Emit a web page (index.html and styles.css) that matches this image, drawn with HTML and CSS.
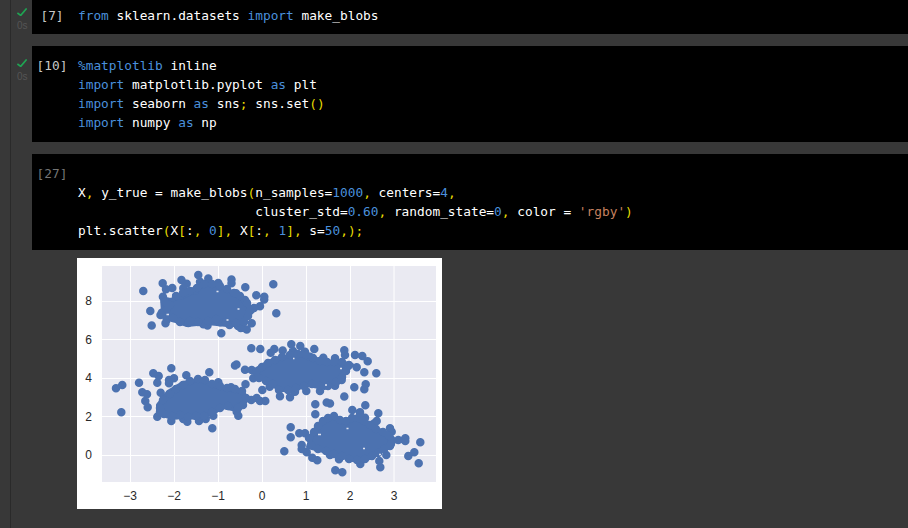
FILE: index.html
```html
<!DOCTYPE html>
<html lang="en">
<head>
    <meta charset="UTF-8">
    <meta name="viewport" content="width=device-width, initial-scale=1.0">
    <title>Notebook</title>
    <link rel="stylesheet" href="styles.css">
</head>
<body>
    <div class="page">
        <div class="rail"></div>
        <main class="notebook">
            <section class="cell cell-first">
                <div class="status">
                    <svg class="check" viewBox="0 0 10 8"><path d="M.4 5 3.7 7.4 9.7.4"/></svg>
                    <span class="time">0s</span>
                </div>
                <div class="code">
                    <span class="prompt">[7]</span>
<pre class="source"><span class="kw">from</span> sklearn.datasets <span class="kw">import</span> make_blobs</pre>
                </div>
            </section>

            <section class="cell">
                <div class="status">
                    <svg class="check" viewBox="0 0 10 8"><path d="M.4 5 3.7 7.4 9.7.4"/></svg>
                    <span class="time">0s</span>
                </div>
                <div class="code">
                    <span class="prompt">[10]</span>
<pre class="source"><span class="kw">%matplotlib</span> inline
<span class="kw">import</span> matplotlib.pyplot <span class="kw">as</span> plt
<span class="kw">import</span> seaborn <span class="kw">as</span> sns<span class="pn">;</span> sns.set<span class="pn">()</span>
<span class="kw">import</span> numpy <span class="kw">as</span> np</pre>
                </div>
            </section>

            <section class="cell">
                <div class="status"></div>
                <div class="code">
                    <span class="prompt prompt-idle">[27]</span>
<pre class="source">

X<span class="pn">,</span> y_true = make_blobs<span class="pn">(</span>n_samples=<span class="num">1000</span><span class="pn">,</span> centers=<span class="num">4</span><span class="pn">,</span>
                       cluster_std=<span class="num">0.60</span><span class="pn">,</span> random_state=<span class="num">0</span><span class="pn">,</span> color = <span class="str">'rgby'</span><span class="pn">)</span>
plt.scatter<span class="pn">(</span>X<span class="pn">[</span>:<span class="pn">,</span> <span class="num">0</span><span class="pn">],</span> X<span class="pn">[</span>:<span class="pn">,</span> <span class="num">1</span><span class="pn">],</span> s=<span class="num">50</span><span class="pn">,);</span></pre>
                </div>
            </section>

            <div class="output">
                <!-- viewBox uses page pixels so the points read straight off the screenshot -->
                <svg class="plot" viewBox="77 258 365 251">
                    <rect class="axes" x="102" y="266" width="334" height="216"/>
                    <path class="grid" d="M130.5 266V482M174.5 266V482M218.5 266V482M262.5 266V482M306.5 266V482M350.5 266V482M394 266V482M102 301.5H436M102 339.5H436M102 378.5H436M102 416.5H436M102 455.5H436"/>

                    <polygon class="blob" points="162,298 170,300 183,297 197,290 207,282 222,287 238,295 250,307 257,307 247,317 243,325 227,325 207,323 187,325 173,320 163,313"/>
                    <polygon class="blob" points="158,405 168,392 183,383 198,380 207,383 220,388 243,392 247,400 240,407 237,410 223,407 213,413 200,418 183,417 172,418 158,413"/>
                    <polygon class="blob" points="255,370 268,362 282,357 305,355 325,362 340,362 352,365 345,373 338,383 325,388 308,385 292,390 278,390 272,382 258,378"/>
                    <polygon class="blob" points="313,432 323,420 333,417 343,423 353,418 367,422 373,428 387,433 393,438 393,445 380,452 370,458 353,460 337,455 320,450 308,447"/>

                    <!-- top cluster -->
                    <path class="dots" d="M143.3 291h0M150.3 311h0M151.7 325.5h0M162.7 283.3h0M166 289.3h0M172.3 288h0M181.5 280h0M186.7 283.8h0M183.3 288.3h0M198.3 275h0M200 281.7h0M195 290.5h0M208.3 278.6h0M218.3 283h0M231.5 279.5h0M231.5 283.3h0M245.3 287.3h0M256.3 295.3h0M264.3 296.7h0M264.2 299.6h0M260 306.3h0M276.3 313.3h0M273.3 284.3h0M245 300h0M236 293.3h0M162.9 296.7h0M160.5 315h0M161.7 312.7h0M165.5 323.3h0M166.7 320h0M188.3 323h0M203.3 324.3h0M207.5 325.5h0M221.3 333.3h0M229.5 325h0M220 322.3h0M240.7 328h0M246.7 329.5h0M251.7 323.3h0M238 326h0"/>
                    <path class="dots" d="M165 302h0M176 296h0M183 293h0M190 291h0M197 288h0M204 284h0M212 284h0M220 286h0M227 289h0M234 293h0M240 296h0M247 303h0M250 310h0M254 308h0M248 316h0M244 322h0M236 323h0M226 322h0M216 319h0M208 321h0M198 322h0M190 321h0M180 322h0M173 318h0M167 309h0M170 305h0"/>
                    <!-- left cluster -->
                    <path class="dots" d="M116 388.3h0M122.3 385h0M121.3 412.3h0M139 382.7h0M142.3 392.3h0M147 394.3h0M145.3 401h0M147.7 407.3h0M153.3 373.3h0M158.7 376h0M157.3 382.7h0M171.3 368.3h0M169 380h0M174 378.3h0M169 383.3h0M186.3 375.3h0M209.3 372.3h0M160.7 392.7h0M218.3 382.3h0M231 387.3h0M245.5 384.3h0M262.3 390h0M251.3 400h0M256.7 398h0M260 401h0M265.3 401h0M157.3 416.7h0M171.3 421h0M187.3 421.7h0M183.3 419h0M199 421h0M205.7 419h0M213.3 415.7h0M212.3 428.3h0M238.3 415.7h0M236.7 411.7h0M238 406.7h0"/>
                    <path class="dots" d="M160 408h0M163 400h0M170 394h0M176 389h0M183 385h0M190 381h0M198 379h0M205 380h0M212 384h0M220 386h0M227 388h0M235 389h0M242 391h0M246 398h0M243 405h0M238 408h0M228 406h0M220 408h0M212 412h0M204 416h0M196 416h0M188 417h0M180 415h0M172 416h0M164 414h0M160 412h0"/>
                    <!-- middle cluster -->
                    <path class="dots" d="M235 365.5h0M236.5 364.5h0M245 369.7h0M251.7 370h0M251.3 348.3h0M260.3 349h0M270.7 352.7h0M274.3 349h0M282.7 350.5h0M291.3 344.3h0M293 351h0M300.3 346h0M305 351.7h0M310 356.7h0M314.3 349h0M323.3 357.7h0M335 358.3h0M344.3 350.3h0M345 355h0M355 355h0M362.3 356h0M367.7 361.3h0M356.7 367.3h0M364.3 372.3h0M376.3 373.3h0M354.3 387.3h0M365.7 384.3h0M364.3 389.3h0M269.7 386.7h0M280 396.3h0M290 397.3h0M295 391.7h0M306.3 391h0M320 391h0M335 385.7h0M341.7 380h0M253.3 378.3h0"/>
                    <path class="dots" d="M256 372h0M262 367h0M268 363h0M275 360h0M282 357h0M290 355h0M298 354h0M306 355h0M313 358h0M320 361h0M327 362h0M334 362h0M342 362h0M349 365h0M346 371h0M342 377h0M336 382h0M328 386h0M320 386h0M312 384h0M304 386h0M296 388h0M288 390h0M279 390h0M273 384h0M266 381h0M259 378h0"/>
                    <!-- bottom cluster -->
                    <path class="dots" d="M315.3 404.3h0M326.7 402.5h0M330 403.5h0M344.3 396.5h0M365.3 405.2h0M378.3 413.3h0M352.3 410h0M360 412.3h0M315.3 414.3h0M290.7 427.3h0M290.7 437.3h0M299.3 433.3h0M305 433.3h0M284.3 451.3h0M301.7 445h0M301.7 449h0M306.7 452.3h0M312.3 457.7h0M317.3 460.3h0M335.3 470.3h0M342.3 472.3h0M339 459.3h0M330 455h0M360.3 464h0M379.3 461h0M380.3 467.3h0M386.3 455h0M390 428.3h0M391.7 431.7h0M405.3 438.3h0M405.3 441h0M398.3 440h0M420.3 442.3h0M414.3 452.3h0M408.3 456h0M418.7 463.3h0M376.7 421h0M374.3 423.3h0M365 417.7h0"/>
                    <path class="dots" d="M314 432h0M318 426h0M323 421h0M328 418h0M334 416h0M340 420h0M346 421h0M352 418h0M358 418h0M364 421h0M370 425h0M376 429h0M383 432h0M389 436h0M392 441h0M390 446h0M384 449h0M378 453h0M372 456h0M365 459h0M357 460h0M349 459h0M342 456h0M334 454h0M326 451h0M318 449h0M311 445h0M309 438h0"/>

                    <!-- gaps between overlapping points -->
                    <path class="specks" d="M170 295.5h2M166.5 314.5h2.5M226.5 320h2M237.5 309h2M216.5 291.5h2M293 358.5h1.5M340 368.5h2M325 385h2M318 434.5h3M363 448.5h2M346.5 428.5h2M379 454.5h2"/>

                    <text class="tick" x="92" y="305">8</text>
                    <text class="tick" x="92" y="343.5">6</text>
                    <text class="tick" x="92" y="382">4</text>
                    <text class="tick" x="92" y="420.5">2</text>
                    <text class="tick" x="92" y="459">0</text>
                    <text class="tick tick-x" x="130" y="500">−3</text>
                    <text class="tick tick-x" x="174" y="500">−2</text>
                    <text class="tick tick-x" x="218" y="500">−1</text>
                    <text class="tick tick-x" x="262" y="500">0</text>
                    <text class="tick tick-x" x="306" y="500">1</text>
                    <text class="tick tick-x" x="350" y="500">2</text>
                    <text class="tick tick-x" x="394" y="500">3</text>
                </svg>
            </div>
        </main>
    </div>
</body>
</html>
```

FILE: styles.css
```css
* {
    margin: 0;
    padding: 0;
    box-sizing: border-box;
}

html, body {
    height: 100%;
    overflow: hidden;
}

body {
    background: #383838;
    color: #fff;
}

.page {
    display: flex;
    height: 100%;
}

.rail {
    width: 11px;
    border-right: 1px solid #2a2a2a;
}

.notebook {
    flex: 1;
    display: flex;
    flex-direction: column;
    gap: 12px;
}

.cell {
    display: flex;
}

.status {
    width: 21px;
    padding: 13px 0 0 6px;
    display: flex;
    flex-direction: column;
    gap: 5px;
}

.cell-first .status {
    padding-top: 8px;
}

.check {
    width: 10px;
    height: 8px;
    display: block;
}

.check path {
    fill: none;
    stroke: #1fa453;
    stroke-width: 1.7;
}

.time {
    font-family: "Liberation Sans", sans-serif;
    font-size: 10px;
    line-height: 10px;
    color: #555;
}

.code {
    flex: 1;
    background: #000;
    display: flex;
    padding: 9.5px 0 10.5px;
    font-family: "DejaVu Sans Mono", monospace;
    font-size: 12.8px;
    line-height: 19px;
}

.cell-first .code {
    padding: 5.5px 0 9.5px;
}

.prompt {
    width: 40px;
    margin-right: 6px;
    text-align: center;
    color: #c8c8c8;
}

.prompt-idle {
    color: #757575;
}

.source {
    font: inherit;
}

.kw, .num {
    color: #4a90dc;
}

.str {
    color: #c5805f;
}

.pn {
    color: #e8dc00;
}

.output {
    margin: -4px 0 0 66px;
}

.plot {
    display: block;
    width: 365px;
    height: 251px;
    background: #fff;
}

.axes {
    fill: #eaeaf2;
}

.grid {
    fill: none;
    stroke: #fff;
    stroke-width: 1;
}

.blob {
    fill: #4c72b0;
    stroke: #4c72b0;
    stroke-width: 4;
    stroke-linejoin: round;
}

.dots {
    fill: none;
    stroke: #4c72b0;
    stroke-width: 8.5;
    stroke-linecap: round;
}

.specks {
    fill: none;
    stroke: #dfe3ef;
    stroke-width: 1.5;
}

.tick {
    font-family: "Liberation Sans", sans-serif;
    font-size: 12px;
    fill: #262626;
    text-anchor: end;
    opacity: 0.99;
}

.tick-x {
    text-anchor: middle;
}
```
